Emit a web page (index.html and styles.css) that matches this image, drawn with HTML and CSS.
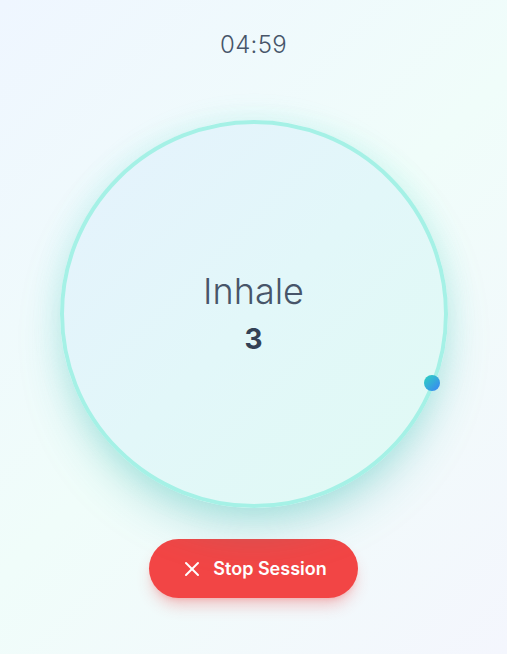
FILE: index.html
```html
<!DOCTYPE html>
<html lang="en">
<head>
<meta charset="utf-8">
<title>Breathing Session</title>
<link rel="stylesheet" href="styles.css">
</head>
<body>
<main class="session">
  <div class="timer">04:59</div>
  <div class="breath">
    <div class="circle">
      <div class="phase">Inhale</div>
      <div class="count">3</div>
    </div>
    <span class="dot"></span>
  </div>
  <button class="stop" type="button">
    <svg class="stop-icon" width="24" height="24" viewBox="0 0 24 24" fill="none" stroke="currentColor" stroke-width="2" stroke-linecap="round" stroke-linejoin="round" aria-hidden="true"><path d="M18 6 6 18"/><path d="m6 6 12 12"/></svg>
    <span class="stop-label">Stop Session</span>
  </button>
</main>
</body>
</html>
```

FILE: styles.css
```css
* { box-sizing: border-box; }

html, body {
  margin: 0;
  height: 100%;
}

body {
  font-family: Inter, "Noto Sans", sans-serif;
  background: linear-gradient(135deg, #eff6ff 0%, #f0fdfa 50%, #f4f6fd 100%);
  min-height: 654px;
}

.session {
  display: flex;
  flex-direction: column;
  align-items: center;
  padding-top: 29px;
}

.timer {
  font-size: 24px;
  line-height: 32px;
  font-weight: 300;
  color: #475569;
  letter-spacing: 0.3px;
}

.breath {
  position: relative;
  margin-top: 59px;
  width: 388px;
  height: 388px;
}

.circle {
  width: 100%;
  height: 100%;
  border-radius: 50%;
  border: 4px solid #a5f1e6;
  background: linear-gradient(135deg, #e5f2fd 0%, #e2f7f9 50%, #e0faf4 100%);
  box-shadow: 0 25px 50px -12px rgba(40, 170, 165, 0.38), 0 0 28px rgba(94, 234, 212, 0.18);
  display: flex;
  flex-direction: column;
  align-items: center;
  justify-content: center;
}

.phase {
  font-size: 36px;
  line-height: 40px;
  font-weight: 300;
  color: #475569;
  margin-top: -2px;
}

.count {
  font-size: 28px;
  line-height: 34px;
  font-weight: 700;
  color: #334155;
  margin-top: 11px;
}

.dot {
  position: absolute;
  left: 364px;
  top: 255px;
  width: 16px;
  height: 16px;
  border-radius: 50%;
  background: linear-gradient(135deg, #2dd4bf, #3b82f6);
}

.stop {
  margin-top: 31px;
  display: flex;
  align-items: center;
  gap: 9px;
  height: 59px;
  padding: 0 31px 0 31px;
  border: none;
  border-radius: 9999px;
  background: #f24545;
  color: #ffffff;
  font-family: Inter, "Noto Sans", sans-serif;
  font-size: 18px;
  font-weight: 600;
  white-space: nowrap;
  box-shadow: 0 10px 15px -3px rgba(239, 68, 68, 0.3), 0 4px 6px -4px rgba(239, 68, 68, 0.3);
  cursor: pointer;
}

.stop-icon {
  flex: none;
}
```
